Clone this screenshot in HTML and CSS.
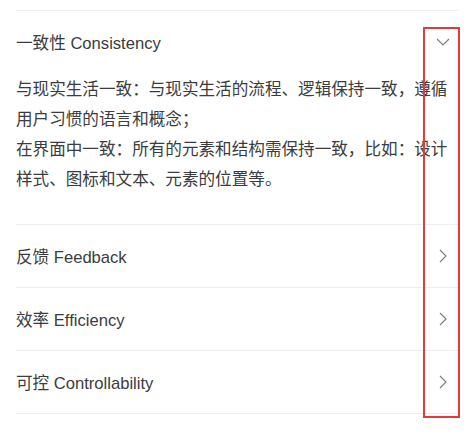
FILE: index.html
```html
<!DOCTYPE html>
<html lang="zh-CN">
<head>
<meta charset="utf-8">
<title>Collapse</title>
<link rel="stylesheet" href="styles.css">
</head>
<body>
<div class="collapse">
  <div class="item active">
    <div class="header">
      <span class="title">一致性 Consistency</span>
      <svg class="arrow" width="14" height="14" viewBox="0 0 14 14"><path d="M1 4 L7 10 L13 4" fill="none" stroke="#7d7f85" stroke-width="1.2"/></svg>
    </div>
    <div class="content">
      <div>与现实生活一致：与现实生活的流程、逻辑保持一致，遵循用户习惯的语言和概念；</div>
      <div>在界面中一致：所有的元素和结构需保持一致，比如：设计样式、图标和文本、元素的位置等。</div>
    </div>
  </div>
  <div class="item">
    <div class="header">
      <span class="title">反馈 Feedback</span>
      <svg class="arrow" width="14" height="14" viewBox="0 0 14 14"><path d="M4 1 L10 7 L4 13" fill="none" stroke="#7d7f85" stroke-width="1.2"/></svg>
    </div>
  </div>
  <div class="item">
    <div class="header">
      <span class="title">效率 Efficiency</span>
      <svg class="arrow" width="14" height="14" viewBox="0 0 14 14"><path d="M4 1 L10 7 L4 13" fill="none" stroke="#7d7f85" stroke-width="1.2"/></svg>
    </div>
  </div>
  <div class="item">
    <div class="header">
      <span class="title">可控 Controllability</span>
      <svg class="arrow" width="14" height="14" viewBox="0 0 14 14"><path d="M4 1 L10 7 L4 13" fill="none" stroke="#7d7f85" stroke-width="1.2"/></svg>
    </div>
  </div>
</div>
<div class="highlight"></div>
</body>
</html>
```
FILE: styles.css
```css
html, body {
  margin: 0;
  padding: 0;
  background: #ffffff;
}
body {
  position: relative;
  width: 474px;
  height: 437px;
  overflow: hidden;
  font-family: "Liberation Sans", "Noto Sans CJK SC", sans-serif;
  color: #3a3c40;
}
.collapse {
  margin: 10px 15px 0 16px;
  border-top: 1px solid #ebeef5;
}
.item {
  border-bottom: 1px solid #ebeef5;
}
.header {
  height: 62px;
  display: flex;
  align-items: center;
  font-size: 16.6px;
  color: #3a3c40;
  padding-bottom: 1px;
  box-sizing: border-box;
}
.title {
  flex: 1;
}
.arrow {
  display: block;
  margin-right: 9px;
}
.content {
  font-size: 16.6px;
  line-height: 30px;
  padding-bottom: 31px;
  color: #3a3c40;
  font-family: "Noto Sans CJK SC", sans-serif;
}
.highlight {
  position: absolute;
  left: 423px;
  top: 27px;
  width: 33px;
  height: 387px;
  border: 2px solid #e8383b;
}
```
